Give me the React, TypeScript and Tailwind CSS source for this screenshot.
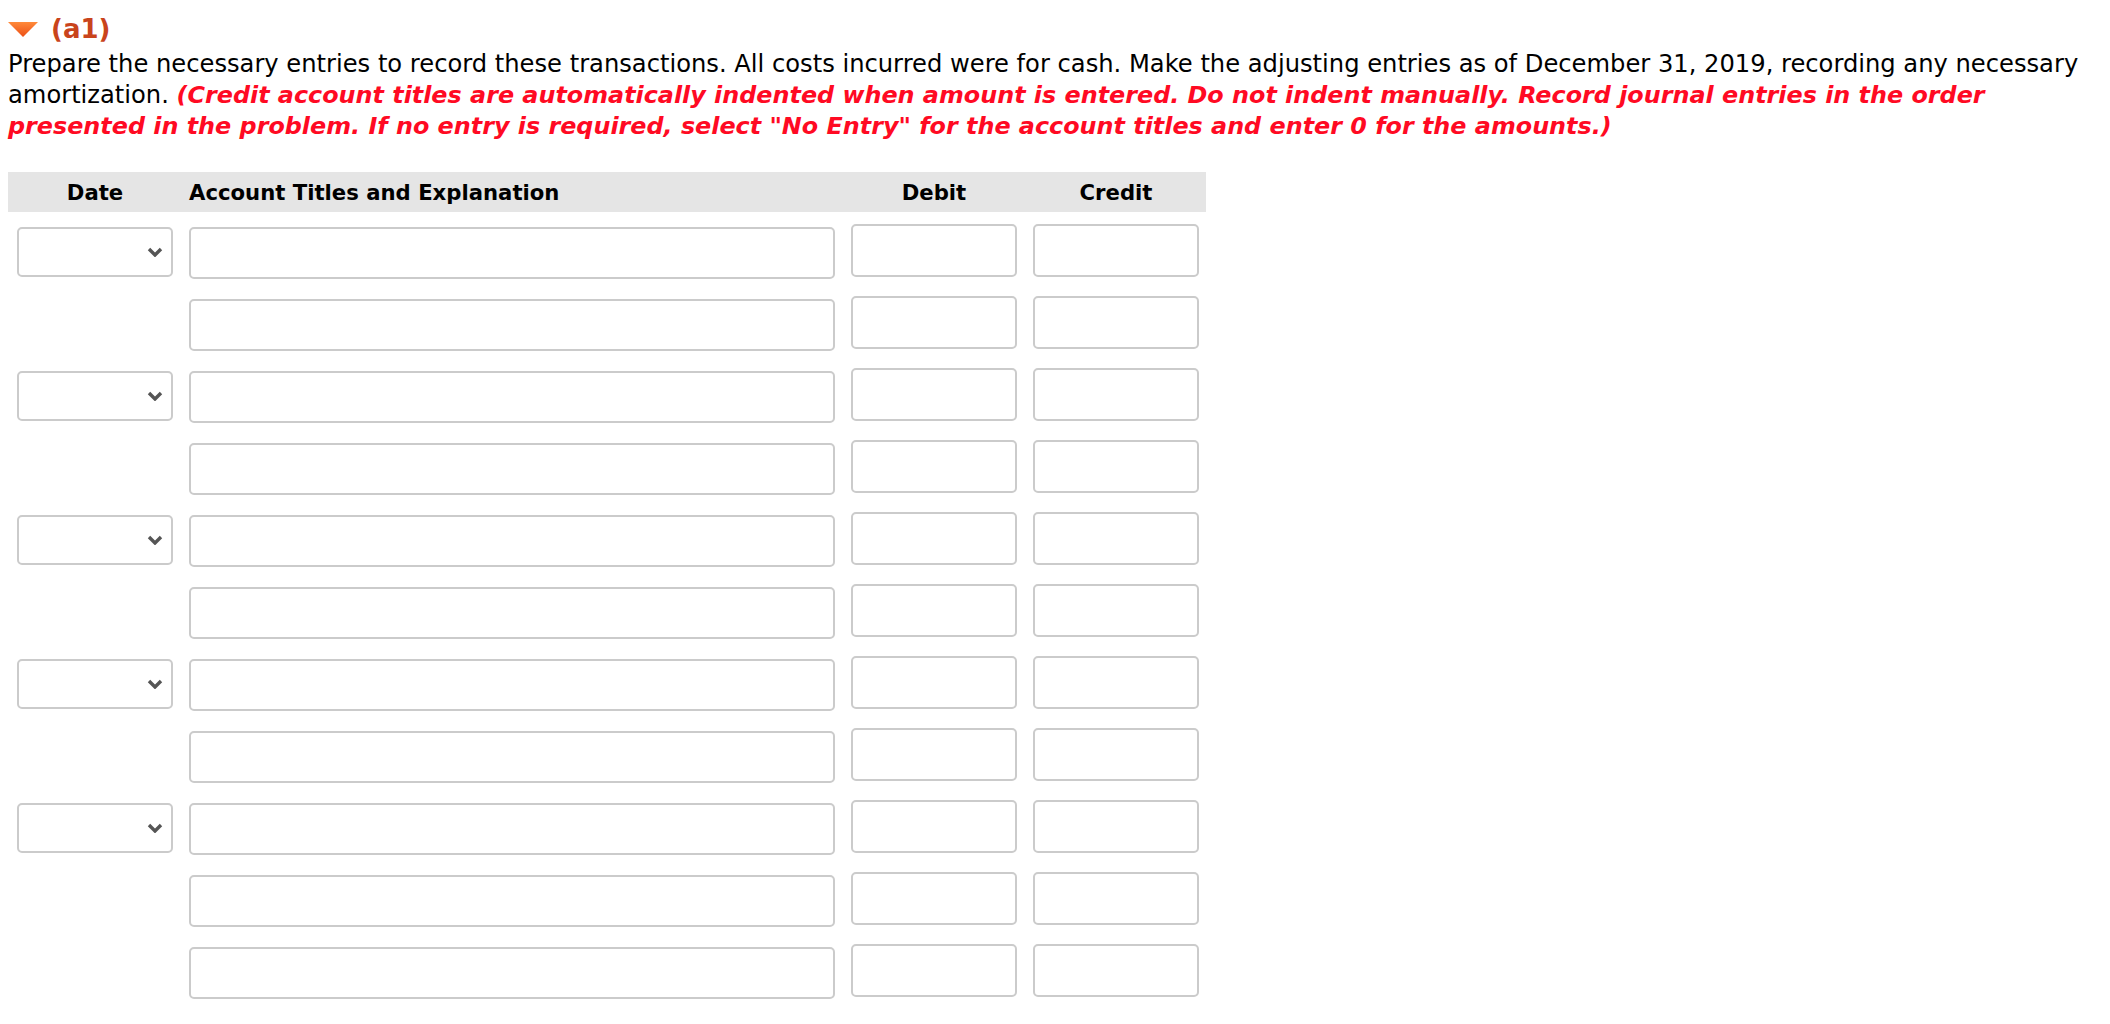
import React from 'react'

const rows = [true, false, true, false, true, false, true, false, true, false, false]

function Chevron() {
  return (
    <svg width="16" height="10" viewBox="0 0 16 10" className="block">
      <path d="M2 2 L8 8 L14 2" fill="none" stroke="#555555" strokeWidth="3.4" strokeLinecap="butt" strokeLinejoin="miter" />
    </svg>
  )
}

function Toggle() {
  return (
    <svg width="30" height="15" viewBox="0 0 30 15" className="block">
      <defs>
        <linearGradient id="tri" x1="0" y1="0" x2="0" y2="1">
          <stop offset="0%" stopColor="#ff8a3a" />
          <stop offset="100%" stopColor="#ec4f16" />
        </linearGradient>
      </defs>
      <polygon points="0,0 30,0 15,15" fill="url(#tri)" />
    </svg>
  )
}

export default function App() {
  return (
    <div className="min-h-screen w-[2110px] bg-white text-black font-['DejaVu_Sans','Liberation_Sans',sans-serif]">
      <div className="pl-2">
        <div className="flex items-center gap-[13px] pt-[14px] h-[44px]">
          <Toggle />
          <span className="text-[26px] font-bold text-[#c9441c] leading-none">(a1)</span>
        </div>

        <p className="text-[24.2px] leading-[31px] mt-[5px] whitespace-nowrap">
          Prepare the necessary entries to record these transactions. All costs incurred were for cash. Make the adjusting entries as of December 31, 2019, recording any necessary
          <br />
          amortization.{' '}
          <span className="italic font-bold text-[#ff0a23] text-[23.85px]">
            (Credit account titles are automatically indented when amount is entered. Do not indent manually. Record journal entries in the order
            <br />
            presented in the problem. If no entry is required, select "No Entry" for the account titles and enter 0 for the amounts.)
          </span>
        </p>

        <div className="w-[1198px] mt-[30px]">
          <div className="flex items-center h-[40px] bg-[#e5e5e5] pl-[9px] gap-4 text-[21.2px] font-bold pt-[2px]">
            <div className="w-[156px] text-center">Date</div>
            <div className="w-[646px]">Account Titles and Explanation</div>
            <div className="w-[166px] text-center">Debit</div>
            <div className="w-[166px] text-center">Credit</div>
          </div>

          <div className="mt-3 pl-[9px]">
            {rows.map((hasDate, i) => (
              <div key={i} className="flex items-start gap-4 h-[72px]">
                <div className="w-[156px] mt-[3px]">
                  {hasDate && (
                    <div className="h-[50px] border-2 border-[#cbcbcb] rounded-[5px] flex items-center justify-end pr-[8px]">
                      <Chevron />
                    </div>
                  )}
                </div>
                <input className="w-[646px] h-[52px] mt-[3px] border-2 border-[#cbcbcb] rounded-[5px] outline-none" />
                <input className="w-[166px] h-[53px] border-2 border-[#cbcbcb] rounded-[5px] outline-none" />
                <input className="w-[166px] h-[53px] border-2 border-[#cbcbcb] rounded-[5px] outline-none" />
              </div>
            ))}
          </div>
        </div>
      </div>
    </div>
  )
}
